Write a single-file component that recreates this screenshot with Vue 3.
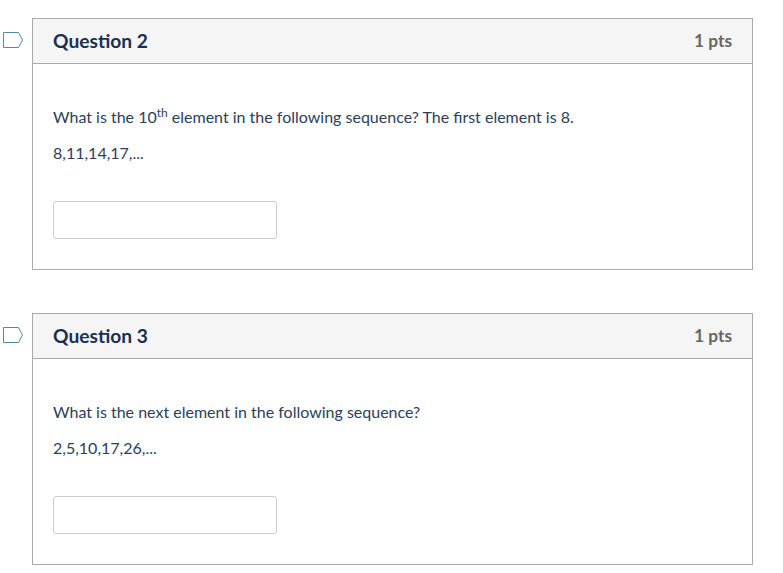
<script setup>
const questions = [
  { title: 'Question 2', seq: '8,11,14,17,...', nth: true },
  { title: 'Question 3', seq: '2,5,10,17,26,...', nth: false },
]
</script>

<template>
  <div class="page">
    <div v-for="q in questions" :key="q.title" class="row">
      <svg class="flag" width="20" height="16" viewBox="0 0 20 16">
        <path d="M0.5 0.5H15.5L19.5 8L15.5 15.5H0.5Z" fill="#fff" stroke="#5287ae" />
      </svg>
      <div class="question">
        <div class="header">
          <h2>{{ q.title }}</h2>
          <span class="pts">1 pts</span>
        </div>
        <div class="body">
          <p v-if="q.nth">What is the 10<sup>th</sup> element in the following sequence? The first element is 8.</p>
          <p v-else>What is the next element in the following sequence?</p>
          <p>{{ q.seq }}</p>
          <input type="text" />
        </div>
      </div>
    </div>
  </div>
</template>

<style>
body { background: #fff; }
</style>

<style scoped>
.page { display: flex; flex-direction: column; gap: 43px; padding-top: 18px; font-family: Lato, "Liberation Sans", sans-serif; color: #2c3e5a; }
.row { position: relative; padding: 0 30px 0 32px; }
.flag { position: absolute; left: 3px; top: 14px; }
.question { border: 1px solid #aaa; height: 252px; box-sizing: border-box; }
.header { display: flex; justify-content: space-between; align-items: center; height: 42px; padding: 0 20px 2px; background: #f5f5f5; border-bottom: 1px solid #aaa; }
h2 { margin: 0; font-size: 19.2px; font-weight: 700; color: #1b2f52; }
.pts { font-size: 17.3px; font-weight: 700; color: #666; }
.body { padding: 43px 20px 0; font-size: 16px; color: #2c3e5a; }
p { margin: 0 0 16px; line-height: 20px; }
sup { font-size: 12px; line-height: 0; vertical-align: 6px; }
input { display: block; width: 224px; height: 38px; box-sizing: border-box; margin-top: 38px; border: 1px solid #ccc; border-radius: 3px; background: #fff; }
</style>
